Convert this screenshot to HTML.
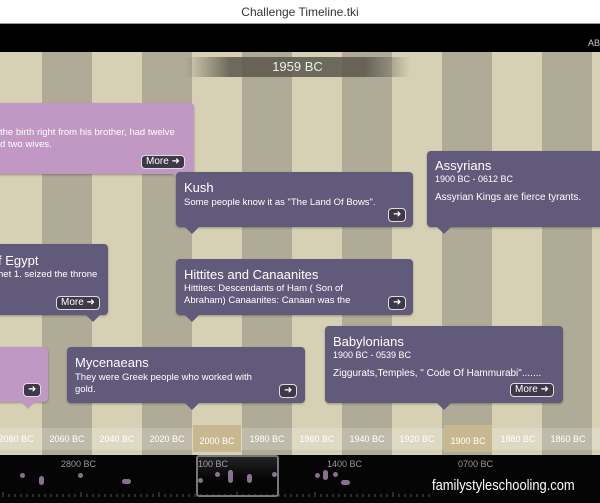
<!DOCTYPE html>
<html><head><meta charset="utf-8"><style>
*{margin:0;padding:0;box-sizing:border-box}
body{width:600px;height:503px;overflow:hidden;font-family:"Liberation Sans",sans-serif;position:relative;background:#d6d0b4}
.abs{position:absolute}
.titlebar{left:0;top:0;width:600px;height:24px;background:#fff;border-bottom:1px solid #999;text-align:center;font-size:12px;line-height:24px;color:#333}
.topblack{left:0;top:24px;width:600px;height:28px;background:#000;color:#ccc;font-size:9px}
.stripes{left:0;top:52px;width:600px;height:403px;background:repeating-linear-gradient(90deg,#d6d0b4 0 42px,#b0ab96 42px 92px,#d6d0b4 92px 100px)}
.datebar{left:185px;top:57px;width:225px;height:20px;background:linear-gradient(90deg,rgba(90,88,76,0),rgba(90,88,76,.85) 20%,rgba(90,88,76,.85) 80%,rgba(90,88,76,0));color:#eee;font-size:13px;text-align:center;line-height:20px}
.card{position:absolute;background:#625a7a;border-radius:4px;color:#fff;box-shadow:0 1px 2px rgba(0,0,0,.3)}
.card.pink{background:#c198c3}
.card h3{font-weight:normal;font-size:13px;margin:0}
.card p{font-size:9.5px;line-height:12px}
.ptr{position:absolute;width:0;height:0;border-left:7px solid transparent;border-right:7px solid transparent;border-top:7px solid #625a7a}
.ptr.pink{border-top-color:#c198c3}
.btn{position:absolute;height:14px;border:1.5px solid #ddd;border-radius:4px;background:#3f3848;color:#fff;font-size:10px;line-height:11px;padding:0 4px}
.lbls{left:0;top:428px;width:600px;height:22px;background:rgba(255,255,255,.2)}
.lbl{position:absolute;top:432px;width:50px;text-align:center;font-size:9px;color:#fff;line-height:14px}
.hl{position:absolute;top:425px;width:48px;height:27px;background:#c8b890}
.bottom{left:0;top:455px;width:600px;height:48px;background:#050505}
.bl{position:absolute;top:459px;font-size:9px;color:#999}
.dot{position:absolute;width:5px;height:5px;border-radius:3px;background:#8a6e90}
</style></head><body>
<div class="abs titlebar">Challenge Timeline.tki</div>
<div class="abs topblack"><span style="position:absolute;left:588px;top:14px">AB</span></div>
<div class="abs stripes"></div>
<div class="abs datebar">1959 BC</div>

<div class="abs lbls"></div>
<div class="hl" style="left:193px"></div>
<div class="hl" style="left:444px"></div>
<div class="lbl" style="left:-9px">2080 BC</div>
<div class="lbl" style="left:42px">2060 BC</div>
<div class="lbl" style="left:92px">2040 BC</div>
<div class="lbl" style="left:142px">2020 BC</div>
<div class="lbl" style="left:192px;top:434px">2000 BC</div>
<div class="lbl" style="left:242px">1980 BC</div>
<div class="lbl" style="left:292px">1960 BC</div>
<div class="lbl" style="left:342px">1940 BC</div>
<div class="lbl" style="left:392px">1920 BC</div>
<div class="lbl" style="left:443px;top:434px">1900 BC</div>
<div class="lbl" style="left:493px">1880 BC</div>
<div class="lbl" style="left:543px">1860 BC</div>

<div class="card pink" style="left:-10px;top:103px;width:204px;height:71px">
<p style="position:absolute;left:10px;top:24px;white-space:nowrap">the birth right from his brother, had twelve<br>d two wives.</p>
<div class="btn" style="left:151px;top:52px">More ➜</div></div>
<div class="ptr pink" style="left:173px;top:174px"></div>

<div class="card" style="left:176px;top:172px;width:237px;height:55px">
<h3 style="position:absolute;left:8px;top:8px">Kush</h3>
<p style="position:absolute;left:8px;top:25px;white-space:nowrap">Some people know it as "The Land Of Bows".</p>
<div class="btn" style="left:212px;top:36px">➜</div></div>
<div class="ptr" style="left:185px;top:227px"></div>

<div class="card" style="left:427px;top:151px;width:180px;height:76px">
<h3 style="position:absolute;left:8px;top:7px">Assyrians</h3>
<p style="position:absolute;left:8px;top:22px;font-size:9px">1900 BC - 0612 BC</p>
<p style="position:absolute;left:8px;top:41px;font-size:10px">Assyrian Kings are fierce tyrants.</p></div>
<div class="ptr" style="left:437px;top:227px"></div>

<div class="card" style="left:-10px;top:244px;width:118px;height:71px">
<h3 style="position:absolute;left:8px;top:9px">f Egypt</h3>
<p style="position:absolute;left:8px;top:25px;white-space:nowrap">het 1. seized the throne</p>
<div class="btn" style="left:66px;top:52px">More ➜</div></div>
<div class="ptr" style="left:86px;top:315px"></div>

<div class="card" style="left:176px;top:259px;width:237px;height:56px">
<h3 style="position:absolute;left:8px;top:8px">Hittites and Canaanites</h3>
<p style="position:absolute;left:8px;top:24px;white-space:nowrap">Hittites: Descendants of Ham ( Son of<br>Abraham) Canaanites: Canaan was the</p>
<div class="btn" style="left:212px;top:37px">➜</div></div>
<div class="ptr" style="left:185px;top:315px"></div>

<div class="card pink" style="left:-10px;top:347px;width:58px;height:55px">
<div class="btn" style="left:33px;top:36px">➜</div></div>
<div class="ptr pink" style="left:21px;top:402px"></div>

<div class="card" style="left:67px;top:347px;width:238px;height:56px">
<h3 style="position:absolute;left:8px;top:8px">Mycenaeans</h3>
<p style="position:absolute;left:8px;top:25px;white-space:nowrap">They were Greek people who worked with<br>gold.</p>
<div class="btn" style="left:212px;top:37px">➜</div></div>
<div class="ptr" style="left:185px;top:403px"></div>

<div class="card" style="left:325px;top:326px;width:238px;height:77px">
<h3 style="position:absolute;left:8px;top:8px">Babylonians</h3>
<p style="position:absolute;left:8px;top:23px;font-size:9px">1900 BC - 0539 BC</p>
<p style="position:absolute;left:8px;top:42px;font-size:10px;white-space:nowrap">Ziggurats,Temples, " Code Of Hammurabi".......</p>
<div class="btn" style="left:185px;top:57px">More ➜</div></div>
<div class="ptr" style="left:437px;top:403px"></div>

<div class="abs bottom"></div>
<svg class="abs" style="left:0;top:485px" width="600" height="12"><g stroke="#555">
<path d="M3 7v5M9 9v3M15 9v3M21 9v3M27 9v3M33 9v3M39 9v3M45 9v3M51 9v3M57 9v3M63 9v3M69 9v3M75 9v3M81 7v5M87 9v3M93 9v3M99 9v3M105 9v3M111 9v3M117 9v3M123 9v3M129 9v3M135 9v3M141 9v3M147 9v3M153 9v3M159 7v5M165 9v3M171 9v3M177 9v3M183 9v3M189 9v3M195 9v3M201 9v3M207 9v3M213 9v3M219 9v3M225 9v3M231 9v3M237 7v5M243 9v3M249 9v3M255 9v3M261 9v3M267 9v3M273 9v3M279 9v3M285 9v3M291 9v3M297 9v3M303 9v3M309 9v3M315 7v5M321 9v3M327 9v3M333 9v3M339 9v3M345 9v3M351 9v3M357 9v3M363 9v3M369 9v3M375 9v3M381 9v3M387 9v3M393 7v5M399 9v3M405 9v3M411 9v3M417 9v3M423 9v3M429 9v3"/></g></svg>
<div class="bl" style="left:61px">2800 BC</div>
<div class="bl" style="left:198px">100 BC</div>
<div class="bl" style="left:327px">1400 BC</div>
<div class="bl" style="left:458px">0700 BC</div>
<div class="dot" style="left:20px;top:473px"></div>
<div class="dot" style="left:39px;top:476px;height:9px"></div>
<div class="dot" style="left:78px;top:473px"></div>
<div class="dot" style="left:122px;top:479px;width:9px"></div>
<div class="dot" style="left:198px;top:478px"></div>
<div class="dot" style="left:215px;top:472px"></div>
<div class="dot" style="left:228px;top:470px;height:13px"></div>
<div class="dot" style="left:247px;top:474px;height:9px"></div>
<div class="dot" style="left:272px;top:472px"></div>
<div class="dot" style="left:315px;top:473px"></div>
<div class="dot" style="left:323px;top:470px;height:10px"></div>
<div class="dot" style="left:333px;top:472px"></div>
<div class="dot" style="left:341px;top:480px;width:9px"></div>
<div class="abs" style="left:196px;top:455px;width:83px;height:42px;border:2px solid #777;border-radius:3px;background:linear-gradient(rgba(255,255,255,.12),rgba(255,255,255,0) 60%)"></div>
<div class="abs" style="left:432px;top:477px;width:200px;font-size:15px;color:#fff;white-space:nowrap;transform:scaleX(0.86);transform-origin:0 0">familystyleschooling.com</div>
</body></html>
